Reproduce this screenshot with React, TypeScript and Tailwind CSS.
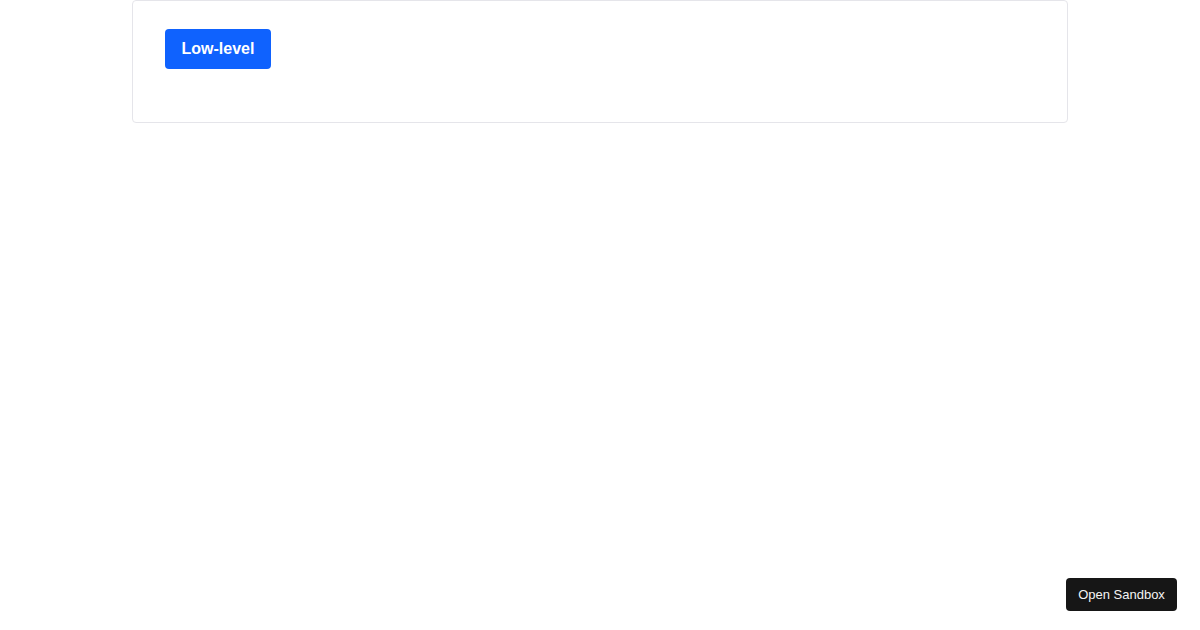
export default function App() {
  return (
    <div className="relative h-[630px] w-full bg-white" style={{ fontFamily: '"Liberation Sans", Arial, sans-serif' }}>
      <div className="mx-auto w-[936px] rounded-[4px] border border-[#e5e5ea] px-8 pt-[28px] pb-[53px]">
        <button className="h-10 w-[106px] rounded-[4px] bg-[#0f62fe] text-base font-bold text-white">
          Low-level
        </button>
      </div>
      <button className="fixed right-[23px] bottom-[19px] h-[33px] w-[111px] rounded-[4px] bg-[#161616] text-[13px] text-[#f4f4f4]">
        Open Sandbox
      </button>
    </div>
  );
}
